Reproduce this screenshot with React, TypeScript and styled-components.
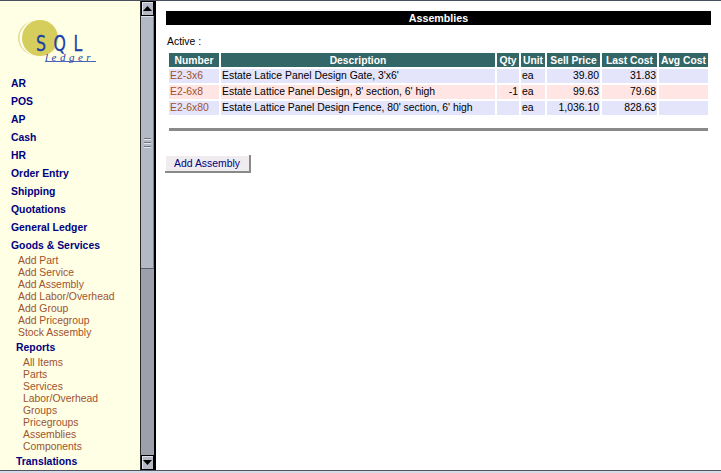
import React from "react";
import styled, { createGlobalStyle } from "styled-components";

const Global = createGlobalStyle`
  html, body { margin: 0; padding: 0; height: 100%; background: #fff; overflow: hidden; }
  body { font-family: "Liberation Sans", Arial, sans-serif; font-size: 10.4px; color: #000; }
  #root { height: 100%; }
`;

const Page = styled.div`
  width: 721px; height: 473px; display: flex; flex-direction: column; overflow: hidden;
`;
const TopEdge = styled.div`height: 1px; background: #4a5060; flex: none;`;
const Frames = styled.div`flex: 1; display: flex; min-height: 0;`;
const BottomEdge = styled.div`
  height: 3px; flex: none; background: #d5dbe6; border-top: 1px solid #4f5563; box-sizing: border-box;
`;

const Menu = styled.nav`
  width: 140px; flex: none; background: #ffffe6; display: flex; flex-direction: column; overflow: hidden;
`;
const Logo = styled.svg`display: block; flex: none; margin: 17px 0 0 17px;`;
const MenuList = styled.div`display: flex; flex-direction: column; margin-top: 1px;`;
const Heading = styled.a<{ $indent?: boolean }>`
  height: 18px; line-height: 18px; font-weight: bold; font-size: 10.4px; color: #000080;
  padding-left: ${p => (p.$indent ? 16 : 11)}px; white-space: nowrap;
`;
const Item = styled.a<{ $deep?: boolean }>`
  height: 12px; line-height: 12px; font-size: 10.4px; color: #a0522d;
  padding-left: ${p => (p.$deep ? 23 : 18)}px; white-space: nowrap;
`;

const ScrollBar = styled.div`
  width: 16px; flex: none; display: flex; flex-direction: column; box-sizing: border-box;
  background: #9ba0aa; border-left: 1px solid #2a2a2a; border-right: 2px solid #000;
`;
const ScrollButton = styled.div`
  height: 15px; flex: none; display: flex; align-items: center; justify-content: center;
  background: #b4b9c4; border: 1px solid #000; box-sizing: border-box;
  box-shadow: inset 1px 1px 0 #dfe2e8;
`;
const Thumb = styled.div`
  height: 253px; flex: none; background: #b4b9c6; display: flex; flex-direction: column; gap: 2px;
  align-items: center; justify-content: center; box-sizing: border-box;
  border-top: 1px solid #dfe2e8; border-bottom: 1px solid #5b606c; border-right: 1px solid #7d828e;
`;
const Grip = styled.span`display: block; width: 7px; height: 2px; background: linear-gradient(#70757f 50%, #e2e5ea 50%);`;
const Track = styled.div`flex: 1;`;

const Content = styled.main`
  flex: 1; min-width: 0; background: #fff; display: flex; flex-direction: column; padding: 10px 10px 0 10px;
`;
const Title = styled.h1`
  margin: 0; height: 14px; line-height: 14px; background: #000; color: #fff; font-size: 10.7px;
  font-weight: bold; text-align: center;
`;
const Note = styled.div`margin: 10px 0 0 1px; height: 14px; line-height: 14px;`;
const Grid = styled.table`
  width: 543px; margin: 2px 0 0 1px; border-collapse: separate; border-spacing: 2px; table-layout: fixed;
`;
const Head = styled.th`
  height: 14px; padding: 0; background: #336666; color: #fff; font-size: 10.3px; font-weight: bold;
  text-align: center; white-space: nowrap; overflow: hidden;
`;
const Row = styled.tr<{ $alt?: boolean }>`background: ${p => (p.$alt ? "#ffe5e3" : "#e4e4fb")};`;
const Cell = styled.td<{ $right?: boolean }>`
  height: 14px; padding: 0 1px; font-size: 10.4px; line-height: 14px; white-space: nowrap; overflow: hidden;
  text-align: ${p => (p.$right ? "right" : "left")};
`;
const Code = styled.a`color: #a0522d;`;
const Rule = styled.div`
  height: 3px; margin: 11px 0 0 3px; width: 539px; background: #888a88; flex: none;
`;
const AddButton = styled.button`
  align-self: flex-start; width: 86px; height: 18px; margin: 24px 0 0 -1px; padding: 0; font: 10.4px "Liberation Sans", Arial, sans-serif;
  color: #000080; background: #efebef; border: 0; border-right: 2px solid #888a88; border-bottom: 2px solid #888a88;
  box-shadow: inset 1px 1px 0 #fff;
`;

const top = ["AR", "POS", "AP", "Cash", "HR", "Order Entry", "Shipping", "Quotations", "General Ledger", "Goods & Services"];
const goods = ["Add Part", "Add Service", "Add Assembly", "Add Labor/Overhead", "Add Group", "Add Pricegroup", "Stock Assembly"];
const reports = ["All Items", "Parts", "Services", "Labor/Overhead", "Groups", "Pricegroups", "Assemblies", "Components"];
const rows = [
  ["E2-3x6", "Estate Latice Panel Design Gate, 3'x6'", "", "ea", "39.80", "31.83", ""],
  ["E2-6x8", "Estate Lattice Panel Design, 8' section, 6' high", "-1", "ea", "99.63", "79.68", ""],
  ["E2-6x80", "Estate Lattice Panel Design Fence, 80' section, 6' high", "", "ea", "1,036.10", "828.63", ""],
];
const columns = [
  { name: "Number", width: 50 }, { name: "Description", width: 274 }, { name: "Qty", width: 22 }, { name: "Unit", width: 24 },
  { name: "Sell Price", width: 53 }, { name: "Last Cost", width: 55 }, { name: "Avg Cost", width: 49 },
];

export default function App() {
  return (
    <Page>
      <Global />
      <TopEdge />
      <Frames>
        <Menu>
          <Logo width="84" height="56" viewBox="0 0 84 56">
            <circle cx="18" cy="20" r="17" fill="#e3dc90" />
            <circle cx="20" cy="20" r="17.5" fill="#fffff0" />
            <circle cx="23" cy="20" r="18" fill="#d6ce5c" />
            <text transform="translate(19 33) scale(0.75 1)" fontFamily="'DejaVu Sans', sans-serif" fontSize="21" fill="#1c3fa8" stroke="#1c3fa8" strokeWidth="0.3" letterSpacing="10">SQL</text>
            <text x="28" y="43" fontFamily="'Liberation Serif', serif" fontStyle="italic" fontSize="11" fill="#1c3fa8" letterSpacing="3.5">ledger</text>
            <path d="M28 43.5H79" stroke="#1c3fa8" strokeWidth="0.8" fill="none" />
          </Logo>
          <MenuList>
            {top.map(t => <Heading key={t}>{t}</Heading>)}
            {goods.map(t => <Item key={t}>{t}</Item>)}
            <Heading $indent>Reports</Heading>
            {reports.map(t => <Item key={t} $deep>{t}</Item>)}
            <Heading $indent>Translations</Heading>
          </MenuList>
        </Menu>
        <ScrollBar>
          <ScrollButton>
            <svg width="9" height="5" viewBox="0 0 9 5"><path d="M4.5 0L9 5H0z" fill="#000" /></svg>
          </ScrollButton>
          <Thumb><Grip /><Grip /><Grip /></Thumb>
          <Track />
          <ScrollButton>
            <svg width="9" height="5" viewBox="0 0 9 5"><path d="M0 0H9L4.5 5z" fill="#000" /></svg>
          </ScrollButton>
        </ScrollBar>
        <Content>
          <Title>Assemblies</Title>
          <Note>Active :</Note>
          <Grid>
            <colgroup>{columns.map(c => <col key={c.name} width={c.width} />)}</colgroup>
            <thead><tr>{columns.map(c => <Head key={c.name}>{c.name}</Head>)}</tr></thead>
            <tbody>
              {rows.map((r, i) => (
                <Row key={r[0]} $alt={i === 1}>
                  <Cell><Code>{r[0]}</Code></Cell>
                  <Cell>{r[1]}</Cell>
                  <Cell $right>{r[2]}</Cell>
                  <Cell>{r[3]}</Cell>
                  <Cell $right>{r[4]}</Cell>
                  <Cell $right>{r[5]}</Cell>
                  <Cell $right>{r[6]}</Cell>
                </Row>
              ))}
            </tbody>
          </Grid>
          <Rule />
          <AddButton>Add Assembly</AddButton>
        </Content>
      </Frames>
      <BottomEdge />
    </Page>
  );
}
